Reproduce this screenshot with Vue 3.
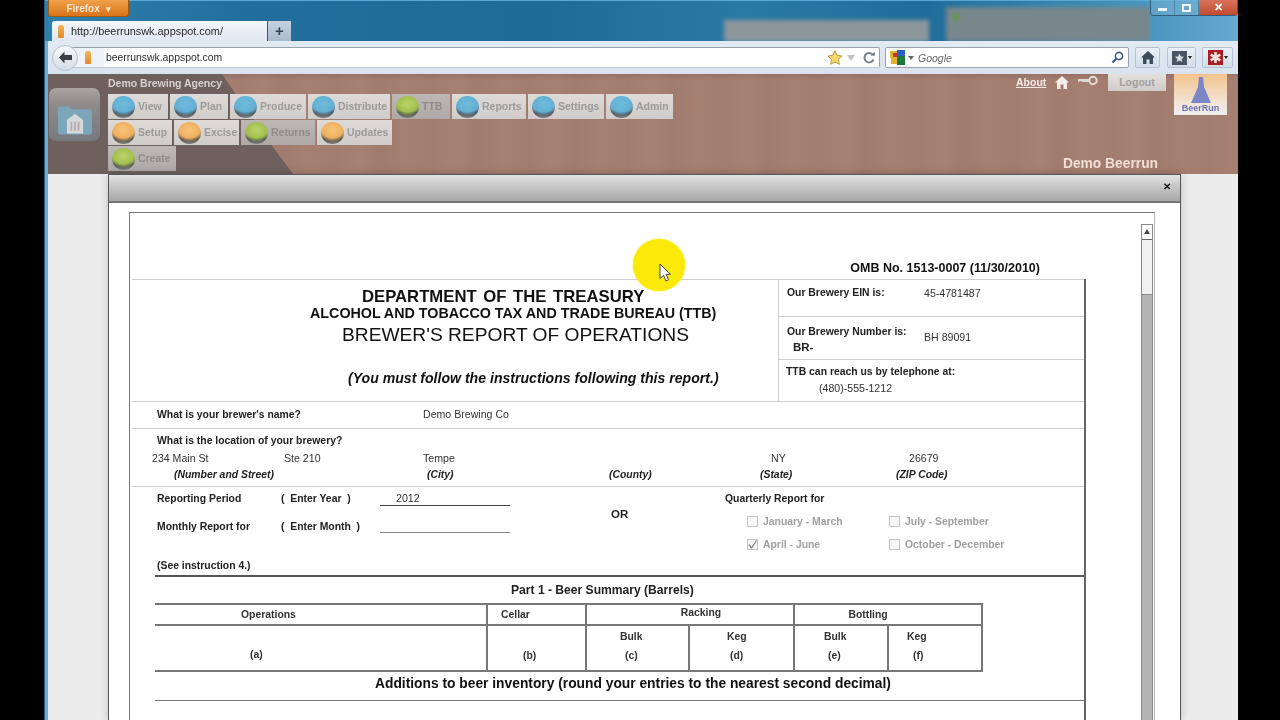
<template>
  <div class="screen">
    <div class="window">
      <div class="titlebar">
        <div class="blur-win win-a"></div>
        <div class="blur-win win-b"><span class="win-b-dot"></span></div>
        <button class="ff-btn">Firefox <span class="ff-caret">▾</span></button>
        <div class="win-controls">
          <span class="ctl"><i class="ctl-min"></i></span>
          <span class="ctl"><i class="ctl-max"></i></span>
          <span class="ctl ctl-close">✕</span>
        </div>
        <div class="tabs">
          <div class="tab"><span class="bottle"></span>http://beerrunswk.appspot.com/</div>
          <div class="tab-new">+</div>
        </div>
      </div>

      <div class="toolbar">
        <div class="back">
          <svg width="15" height="13" viewBox="0 0 15 13"><path d="M6.500 .5 1 6.500l5.500 6V9h7.500V4H6.500z" fill="#3c4147" /></svg>
        </div>
        <div class="urlbar">
          <span class="url-icon"><span class="bottle"></span></span>
          <span class="url-text">beerrunswk.appspot.com</span>
          <svg class="star" width="16" height="15" viewBox="0 0 16 15"><path d="M8 .8l2.200 4.500 4.900.7-3.600 3.400.9 4.900L8 12l-4.400 2.300.9-4.900L.9 6l4.900-.7z" fill="#f6d66c" stroke="#b08a2c" stroke-width=".8" /></svg>
          <span class="url-drop"></span>
          <svg width="14" height="14" viewBox="0 0 14 14"><path d="M11.500 8.500A4.700 4.700 0 1 1 10.600 3.500" fill="none" stroke="#7a8289" stroke-width="2" /><path d="M8.500 4.800h4.300V.6z" fill="#7a8289" /></svg>
        </div>
        <div class="search">
          <svg width="16" height="15" viewBox="0 0 16 15"><rect x="0" y="1" width="7" height="7" fill="#d9b53a" /><rect x="7" y="0" width="8" height="6" fill="#2a5fc4" /><rect x="7" y="6" width="8" height="9" fill="#1d7a3a" /><rect x="1" y="8" width="6" height="6" fill="#e2b030" /><rect x="3" y="3" width="4" height="4" fill="#c9352b" /></svg>
          <span class="search-drop"></span>
          <span class="search-text">Google</span>
          <svg class="lens" width="13" height="13" viewBox="0 0 13 13"><circle cx="8" cy="5" r="3.600" fill="none" stroke="#3f5f80" stroke-width="1.600" /><path d="M5.500 7.500 1.500 11.500" stroke="#3f5f80" stroke-width="2.400" /></svg>
        </div>
        <div class="tool-btn tb-home">
          <svg width="14" height="13" viewBox="0 0 14 13"><path d="M7 0 0 6.500h2V13h3.500V8.500h3V13H12V6.500h2z" fill="#3d4c5c" /></svg>
        </div>
        <div class="tool-btn tb-book">
          <svg width="15" height="14" viewBox="0 0 15 14"><rect width="15" height="14" fill="#4a5563" /><path d="M7.500 2.500l1.400 2.900 3.100.4-2.300 2.200.6 3.100-2.800-1.500-2.800 1.500.6-3.100L3 5.800l3.100-.4z" fill="#d6dde4" /></svg>
          <span class="mini-caret"></span>
        </div>
        <div class="tool-btn tb-lp">
          <svg width="15" height="15" viewBox="0 0 15 15"><rect width="15" height="15" fill="#a91f24" /><path d="M7.500 2v11M2.700 4.700l9.600 5.600M12.300 4.700l-9.600 5.600" stroke="#f4e4dc" stroke-width="2.600" /></svg>
          <span class="mini-caret"></span>
        </div>
      </div>

      <div class="page">
        <header class="site-head">
          <div class="dark-shape"></div>
          <div class="folder">
            <svg width="36" height="30" viewBox="0 0 40 32">
              <path d="M1 4q0-3 3-3h9l3 3h20q3 0 3 3v22q0 3-3 3H4q-3 0-3-3z" fill="#7da5ba" />
              <path d="M20 9 11 16v15h18V16z" fill="#d5d9da" />
              <path d="M15 18h2v10h-2zM19 18h2v10h-2zM23 18h2v10h-2z" fill="#b7a8ae" />
            </svg>
          </div>
          <div class="head-main">
            <div class="agency">Demo Brewing Agency</div>
            <nav class="menu">
              <div v-for="(row, i) in menuRows" :key="i" class="menu-row">
                <div v-for="item in row" :key="item.label" class="menu-btn" :class="{ active: item.color === 'green' }" :style="{ width: item.w + 'px' }">
                  <span class="orb" :class="item.color"></span>
                  <span>{{ item.label }}</span>
                </div>
              </div>
            </nav>
          </div>
          <div class="head-right">
            <div class="head-links">
              <span class="about">About</span>
              <svg class="home" width="14" height="13" viewBox="0 0 14 13"><path d="M7 0 0 6.500h2V13h3.500V8.500h3V13H12V6.500h2z" fill="#f2ebe6" /></svg>
              <svg class="key" width="20" height="11" viewBox="0 0 20 11"><circle cx="15" cy="5.500" r="3.700" fill="none" stroke="#e3ddd6" stroke-width="2" /><path d="M0 4h11v3H5L3 6 0 7z" fill="#d8dcd6" /></svg>
              <span class="logout">Logout</span>
              <div class="logo">
                <svg width="22" height="26" viewBox="0 0 22 26"><path d="M9 0h4l1 10 7 16H1l7-16z" fill="#7c86c6" /></svg>
                <span class="logo-text">BeerRun</span>
              </div>
            </div>
            <div class="user">Demo Beerrun</div>
          </div>
        </header>

        <main class="content">
          <section class="modal">
            <div class="modal-head"><span class="modal-x">✕</span></div>
            <div class="modal-body">
              <div class="frame">
                <form class="form">
                  <div class="omb">OMB No. 1513-0007 (11/30/2010)</div>

                  <div class="form-body">
                    <div class="row head-row">
                      <div class="titles">
                        <div class="t-dept">DEPARTMENT OF THE TREASURY</div>
                        <div class="t-ttb">ALCOHOL AND TOBACCO TAX AND TRADE BUREAU (TTB)</div>
                        <div class="t-report">BREWER'S REPORT OF OPERATIONS</div>
                        <div class="t-note">(You must follow the instructions following this report.)</div>
                      </div>
                      <div class="facts">
                        <div class="fact fact-ein"><b>Our Brewery EIN is:</b><span>45-4781487</span></div>
                        <div class="fact fact-num">
                          <div>
                            <b>Our Brewery Number is:</b>
                            <b class="br">BR-</b>
                          </div>
                          <span>BH 89091</span>
                        </div>
                        <div class="fact-tel"><b>TTB can reach us by telephone at:</b><span>(480)-555-1212</span></div>
                      </div>
                    </div>

                    <div class="row name-row"><b>What is your brewer's name?</b><span>Demo Brewing Co</span></div>

                    <div class="row loc-row">
                      <b class="loc-label">What is the location of your brewery?</b>
                      <div class="loc-values">
                        <span>234 Main St</span><span>Ste 210</span><span>Tempe</span><span>NY</span><span>26679</span>
                      </div>
                      <div class="loc-caps">
                        <i>(Number and Street)</i><i>(City)</i><i>(County)</i><i>(State)</i><i>(ZIP Code)</i>
                      </div>
                    </div>

                    <div class="row period">
                      <div class="p-left">
                        <div class="p-line">
                          <b>Reporting Period</b><b>(&nbsp; Enter Year &nbsp;)</b><span class="blank">2012</span>
                        </div>
                        <div class="p-line">
                          <b>Monthly Report for</b><b>(&nbsp; Enter Month &nbsp;)</b><span class="blank"></span>
                        </div>
                        <b class="p-see">(See instruction 4.)</b>
                      </div>
                      <b class="p-or">OR</b>
                      <div class="p-right">
                        <b class="q-title">Quarterly Report for</b>
                        <div class="q-grid">
                          <label v-for="q in quarters" :key="q.label" class="q-item">
                            <span class="q-box">
                              <svg v-if="q.checked" width="11" height="11" viewBox="0 0 11 11"><path d="M2 5.500 4.500 9 9.500 1.500" fill="none" stroke="#8a8a8a" stroke-width="1.300" /></svg>
                            </span>
                            {{ q.label }}
                          </label>
                        </div>
                      </div>
                    </div>

                    <div class="part-title">Part 1 - Beer Summary (Barrels)</div>

                    <div class="summary">
                      <div class="c c-ops">Operations</div>
                      <div class="c c-cellar">Cellar</div>
                      <div class="c c-rack">Racking</div>
                      <div class="c c-bott">Bottling</div>
                      <div class="c c-a">(a)</div>
                      <div class="c c-b">(b)</div>
                      <div class="c c-sub c-c"><span>Bulk</span><span>(c)</span></div>
                      <div class="c c-sub c-d"><span>Keg</span><span>(d)</span></div>
                      <div class="c c-sub c-e"><span>Bulk</span><span>(e)</span></div>
                      <div class="c c-sub c-f"><span>Keg</span><span>(f)</span></div>
                    </div>

                    <div class="additions">Additions to beer inventory (round your entries to the nearest second decimal)</div>
                  </div>
                </form>

                <div class="scrollbar">
                  <div class="sb-up"></div>
                  <div class="sb-thumb"></div>
                  <div class="sb-track"></div>
                </div>
              </div>
            </div>
            <div class="pointer">
              <svg width="12" height="19" viewBox="0 0 12 19"><path d="M1 1v14.500l3.500-3.200L7 18l2.600-1.200-2.500-5.500h4.400z" fill="#fff" stroke="#444" stroke-width="1" /></svg>
            </div>
          </section>
        </main>
      </div>
    </div>
  </div>
</template>

<script setup>
const menuRows = [
  [
    { label: 'View', color: 'blue', w: 60 },
    { label: 'Plan', color: 'blue', w: 58 },
    { label: 'Produce', color: 'blue', w: 76 },
    { label: 'Distribute', color: 'blue', w: 82 },
    { label: 'TTB', color: 'green', w: 58 },
    { label: 'Reports', color: 'blue', w: 74 },
    { label: 'Settings', color: 'blue', w: 76 },
    { label: 'Admin', color: 'blue', w: 67 },
  ],
  [
    { label: 'Setup', color: 'orange', w: 64 },
    { label: 'Excise', color: 'orange', w: 65 },
    { label: 'Returns', color: 'green', w: 74 },
    { label: 'Updates', color: 'orange', w: 75 },
  ],
  [{ label: 'Create', color: 'green', w: 68 }],
]

const quarters = [
  { label: 'January - March' },
  { label: 'July - September' },
  { label: 'April - June', checked: true },
  { label: 'October - December' },
]
</script>

<style>
html,
body {
  margin: 0;
  overflow: hidden;
  background: #000;
}
</style>

<style scoped>
* {
  box-sizing: border-box;
}

.screen {
  width: 1280px;
  height: 720px;
  padding: 0 42px 0 44px;
  background: #000;
  font-family: "Liberation Sans", Arial, sans-serif;
  overflow: hidden;
}

.window {
  height: 100%;
  display: flex;
  flex-direction: column;
  background: #6fabd0;
  border-left: 1px solid #2c5d7c;
}

/* title bar */
.titlebar {
  position: relative;
  height: 41px;
  flex: none;
  background: linear-gradient(90deg, #2f80ab 0, #226f9d 200px, #1f6b97 500px, #2a7aa6 700px, #1f6d9a 880px, #4b97c1 1110px, #67a9cf 1193px);
  border-top: 1px solid #57a8d6;
  filter: blur(0.5px);
}

.blur-win {
  position: absolute;
  background: #8f9a9f;
  filter: blur(2px);
}

.win-a {
  left: 679px;
  top: 19px;
  width: 205px;
  height: 22px;
  background: #8c979c;
}

.win-b {
  left: 901px;
  top: 6px;
  width: 204px;
  height: 35px;
  background: #78878c;
}

.win-b-dot {
  display: block;
  width: 6px;
  height: 6px;
  margin: 7px 0 0 7px;
  background: #5f9a3a;
}

.ff-btn {
  position: absolute;
  left: 3px;
  top: -1px;
  width: 81px;
  height: 17px;
  padding: 0;
  border: 1px solid #9c5a14;
  border-top: 0;
  border-radius: 0 0 3px 3px;
  background: linear-gradient(#f0a24a, #d9741a);
  color: #fbe7cf;
  font: bold 10px "Liberation Sans", sans-serif;
}

.ff-caret {
  font-size: 9px;
  margin-left: 3px;
}

.win-controls {
  position: absolute;
  right: 0;
  top: -1px;
  display: flex;
  height: 16px;
  border: 1px solid #2f5f7d;
  border-top: 0;
  border-radius: 0 0 4px 4px;
}

.ctl {
  width: 24px;
  display: flex;
  align-items: center;
  justify-content: center;
  background: rgba(255, 255, 255, 0.12);
  border-right: 1px solid #4d83a3;
  color: #fff;
}

.ctl-close {
  width: 38px;
  background: linear-gradient(#d9735c, #c04a30);
  border-right: 0;
  font-size: 11px;
  font-weight: bold;
}

.ctl-min {
  width: 9px;
  height: 3px;
  margin-top: 4px;
  background: #eef4f8;
}

.ctl-max {
  width: 9px;
  height: 8px;
  border: 2px solid #eef4f8;
}

.tabs {
  position: absolute;
  left: 7px;
  top: 20px;
  display: flex;
  align-items: flex-end;
}

.tab {
  width: 216px;
  height: 20px;
  display: flex;
  align-items: center;
  gap: 7px;
  padding-left: 6px;
  background: linear-gradient(#f4f7fb, #dfe7f1);
  border-right: 1px solid #47566a;
  border-radius: 3px 0 0 0;
  font-size: 10.900px;
  color: #26282b;
}

.tab-new {
  width: 23px;
  height: 20px;
  text-align: center;
  background: linear-gradient(#c5d3e0, #a9bacb);
  color: #33414f;
  font-size: 15px;
  font-weight: bold;
  line-height: 19px;
}

.bottle {
  display: block;
  width: 6px;
  height: 13px;
  flex: none;
  background: linear-gradient(#f0b55a, #e08a24);
  border-radius: 3px 3px 1px 1px;
}

/* toolbar */
.toolbar {
  height: 33px;
  flex: none;
  display: flex;
  align-items: center;
  margin-left: 3px;
  padding: 0 5px 0 2px;
  background: linear-gradient(#e2eaf3, #d9e3ee);
  filter: blur(0.4px);
}

.back {
  width: 26px;
  height: 26px;
  flex: none;
  display: flex;
  align-items: center;
  justify-content: center;
  margin-left: 2px;
  border-radius: 50%;
  border: 1px solid #b5c0cb;
  background: linear-gradient(#f6f8fb, #d5dde6);
  position: relative;
  z-index: 1;
}

.urlbar {
  width: 813px;
  height: 21px;
  margin-left: -9px;
  display: flex;
  align-items: center;
  padding-right: 3px;
  background: #fff;
  border: 1px solid #9aa3ac;
  border-bottom-color: #c0c8d0;
  border-radius: 2px;
}

.url-icon {
  width: 34px;
  height: 100%;
  padding: 3px 0 0 15px;
  flex: none;
  background: #eef3f8;
}

.url-text {
  flex: 1;
  padding-left: 2px;
  font-size: 10.400px;
  color: #2a2c2e;
}

.star {
  margin-right: 4px;
}

.url-drop {
  width: 0;
  height: 0;
  margin-right: 7px;
  border: 4px solid transparent;
  border-top: 6px solid #c0c4c8;
  border-bottom: 0;
}

.search {
  width: 244px;
  height: 21px;
  flex: none;
  margin-left: 5px;
  display: flex;
  align-items: center;
  padding: 0 4px;
  background: #fff;
  border: 1px solid #9aa3ac;
  border-radius: 2px;
}

.search-drop {
  width: 0;
  height: 0;
  margin-left: 2px;
  border: 3px solid transparent;
  border-top: 4px solid #666;
  border-bottom: 0;
}

.search-text {
  flex: 1;
  padding-left: 4px;
  font-size: 10.500px;
  font-style: italic;
  color: #666;
}

.tool-btn {
  height: 21px;
  flex: none;
  display: flex;
  align-items: center;
  justify-content: center;
  gap: 1px;
  border: 1px solid #b6c2ce;
  border-radius: 2px;
  background: linear-gradient(#e9eff6, #d3dde8);
}

.tb-home {
  width: 25px;
  margin-left: 6px;
}

.tb-book {
  width: 29px;
  margin-left: 7px;
}

.tb-lp {
  width: 31px;
  margin-left: 6px;
}

.mini-caret {
  width: 0;
  height: 0;
  border: 2px solid transparent;
  border-top: 3px solid #222;
  border-bottom: 0;
}

/* page */
.page {
  flex: 1;
  min-height: 0;
  margin-left: 3px;
  display: flex;
  flex-direction: column;
  background: #efefef;
}

.site-head {
  position: relative;
  height: 100px;
  flex: none;
  display: flex;
  overflow: hidden;
  background:
    linear-gradient(rgba(110, 60, 60, 0.2), rgba(0, 0, 0, 0) 6px),
    repeating-linear-gradient(90deg, #a37d70 0, #a68072 23px, #a17b6e 41px, #a57f71 67px, #a27c6f 97px);
}

.dark-shape {
  position: absolute;
  inset: 0;
  background: #6e605d;
  clip-path: polygon(0 0, 174px 0, 187px 19px, 225px 73px, 245px 100px, 0 100px);
}

.folder {
  position: relative;
  width: 51px;
  height: 53px;
  margin: 14px 0 0 1px;
  flex: none;
  display: flex;
  align-items: flex-end;
  justify-content: center;
  padding-bottom: 6px;
  border-radius: 7px;
  background: linear-gradient(#a8a4a3, #8f8b8a 30%, #75797d);
  filter: blur(0.7px);
}

.head-main {
  position: relative;
  margin-left: 8px;
  filter: blur(0.6px);
}

.agency {
  height: 20px;
  padding-top: 3px;
  font-size: 10.500px;
  font-weight: bold;
  color: #d8d2cf;
}

.menu {
  display: flex;
  flex-direction: column;
  gap: 1px;
}

.menu-row {
  display: flex;
  gap: 2px;
}

.menu-btn {
  height: 25px;
  display: flex;
  align-items: center;
  gap: 3px;
  padding: 0 0 1px 4px;
  background: linear-gradient(#dedad8, #d0ccca);
  font-size: 10.500px;
  font-weight: bold;
  color: #9b9b9b;
  white-space: nowrap;
}

.menu-btn.active {
  background: linear-gradient(#bdb7b5, #aea9a7);
  color: #8f8b89;
}

.orb {
  width: 23px;
  height: 22px;
  flex: none;
  margin-top: 1px;
  border-radius: 50%;
  background-repeat: no-repeat;
}

.orb.blue {
  background-image: radial-gradient(ellipse 62% 52% at 50% 36%, #6fbcdc 0, #62b0d4 70%, rgba(98, 176, 212, 0) 100%), linear-gradient(#e6e9ea 0, #c3cbd0 26%, #46535e 74%, #7f7f7f 100%);
}

.orb.orange {
  background-image: radial-gradient(ellipse 62% 52% at 50% 36%, #f6c47a 0, #efb060 70%, rgba(239, 176, 96, 0) 100%), linear-gradient(#ece8e0 0, #d2c8b8 26%, #56503f 74%, #7f7f7f 100%);
}

.orb.green {
  background-image: radial-gradient(ellipse 62% 52% at 50% 36%, #bcd46c 0, #a2c04e 70%, rgba(162, 192, 78, 0) 100%), linear-gradient(#e6e8da 0, #c6ccb4 26%, #4f5844 74%, #7f7f7f 100%);
}

.head-right {
  position: absolute;
  right: 0;
  top: 0;
  width: 230px;
  height: 100%;
  filter: blur(0.5px);
}

.head-links {
  display: flex;
  align-items: flex-start;
  padding-left: 8px;
  color: #f2ebe6;
}

.about {
  width: 30px;
  margin: 2px 9px 0 0;
  font-size: 10.500px;
  font-weight: bold;
  text-decoration: underline;
}

.home {
  margin-top: 2px;
}

.key {
  margin: 1px 0 0 9px;
}

.logout {
  width: 58px;
  height: 17px;
  margin-left: 10px;
  text-align: center;
  background: linear-gradient(#e4e0de, #cfcbc9);
  font-size: 10.500px;
  font-weight: bold;
  line-height: 16px;
  color: #a0a0a0;
}

.logo {
  width: 53px;
  height: 41px;
  margin-left: 8px;
  display: flex;
  flex-direction: column;
  align-items: center;
  padding-top: 3px;
  background: linear-gradient(#f2c38c, #f2e4d6 70%, #eee);
}

.logo-text {
  font-size: 9px;
  line-height: 10px;
  font-weight: bold;
  color: #6a72b4;
}

.user {
  position: absolute;
  right: 80px;
  bottom: 3px;
  font-size: 13.800px;
  font-weight: bold;
  color: #f0dfd6;
}

/* modal */
.content {
  flex: 1;
  min-height: 0;
  padding-left: 60px;
  background: #ececec;
}

.modal {
  position: relative;
  width: 1073px;
  height: 100%;
  border: 1px solid #555;
  border-bottom: 0;
  background: #fff;
  box-shadow: 0 0 8px rgba(0, 0, 0, 0.2);
}

.modal-head {
  height: 28px;
  display: flex;
  align-items: center;
  justify-content: flex-end;
  padding: 0 9px 3px 0;
  background: linear-gradient(#e4e4e4, #c8c8c8 40%, #a9a9a9);
  border-bottom: 2px solid #777;
}

.modal-x {
  font-size: 10px;
  font-weight: bold;
  color: #111;
}

.modal-body {
  padding: 9px 0 0 20px;
}

.frame {
  width: 1026px;
  height: 509px;
  display: flex;
  padding-left: 2px;
  border: 1px solid #777;
  border-right-color: #b5b5b5;
  border-bottom: 0;
}

.scrollbar {
  width: 12px;
  margin: 11px 0 0 55px;
  display: flex;
  flex-direction: column;
  flex: none;
  border: 1px solid #8a8a8a;
  border-bottom: 0;
}

.sb-up {
  height: 15px;
  border-bottom: 1px solid #666;
  position: relative;
}

.sb-up::after {
  content: "";
  position: absolute;
  left: 2px;
  top: 4px;
  border: 3px solid transparent;
  border-top: 0;
  border-bottom: 5px solid #444;
}

.sb-thumb {
  height: 55px;
  background: #f0f0f0;
  border-bottom: 1px solid #888;
}

.sb-track {
  flex: 1;
  background: #b4b4b4;
}

.pointer {
  position: absolute;
  left: 524px;
  top: 64px;
  width: 52px;
  height: 52px;
  display: flex;
  justify-content: center;
  padding-top: 24px;
  border-radius: 50%;
  background: #fbe90a;
  box-shadow: 0 0 2px #fbe90a;
}

.pointer svg {
  margin-left: 12px;
}

/* form */
.form {
  width: 954px;
  flex: none;
  display: flex;
  flex-direction: column;
  font-size: 10.600px;
  color: #333;
}

.form b,
.form i {
  font-size: 10.400px;
  color: #222;
}

.omb {
  height: 66px;
  flex: none;
  padding: 48px 46px 0 0;
  text-align: right;
  font-size: 12.500px;
  font-weight: bold;
  color: #111;
}

.form-body {
  flex: 1;
  border-right: 2px solid #666;
}

.row {
  border-top: 1px solid #cfcfcf;
}

.head-row {
  height: 122px;
  display: flex;
}

.titles {
  width: 647px;
  border-right: 1px solid #cfcfcf;
  color: #111;
  white-space: nowrap;
}

.t-dept {
  padding: 8px 0 0 230px;
  font-size: 16.700px;
  line-height: 18px;
  font-weight: bold;
  word-spacing: 2px;
}

.t-ttb {
  margin-top: -1px;
  padding-left: 178px;
  font-size: 14.300px;
  line-height: 16px;
  font-weight: bold;
}

.t-report {
  padding: 3px 0 0 210px;
  font-size: 19.200px;
  line-height: 22px;
}

.t-note {
  padding: 24px 0 0 216px;
  font-size: 14.100px;
  line-height: 16px;
  font-weight: bold;
  font-style: italic;
}

.facts {
  flex: 1;
  display: flex;
  flex-direction: column;
}

.fact {
  display: flex;
  border-bottom: 1px solid #cfcfcf;
  padding-left: 8px;
}

.fact-ein {
  height: 37px;
  padding-top: 7px;
}

.fact-num {
  height: 43px;
  padding-top: 8px;
}

.fact-ein b {
  width: 137px;
}

.fact-num > div {
  width: 137px;
}

.fact-num > span {
  padding-top: 6px;
}

.form .br {
  display: block;
  margin: 4px 0 0 6px;
  font-size: 11.500px;
}

.fact-tel {
  padding: 6px 0 0 7px;
}

.fact-tel b,
.fact-tel span {
  display: block;
}

.fact-tel span {
  margin: 5px 0 0 33px;
}

.name-row {
  height: 27px;
  display: grid;
  grid-template-columns: 266px 1fr;
  align-items: center;
  padding: 0 0 2px 25px;
}

.loc-row {
  height: 58px;
  padding-top: 6px;
}

.loc-label {
  display: block;
  padding-left: 25px;
}

.loc-values,
.loc-caps {
  display: grid;
}

.loc-values {
  margin-top: 6px;
  grid-template-columns: 132px 139px 348px 138px 1fr;
  padding-left: 20px;
}

.loc-caps {
  margin-top: 5px;
  grid-template-columns: 253px 182px 151px 136px 1fr;
  padding-left: 42px;
  font-weight: bold;
}

.period {
  position: relative;
  height: 90px;
  display: flex;
}

.period::after {
  content: "";
  position: absolute;
  left: 23px;
  right: 0;
  bottom: -1px;
  height: 2px;
  background: #555;
}

.p-left {
  width: 479px;
  padding: 5px 0 0 25px;
}

.p-line {
  height: 28px;
  display: grid;
  grid-template-columns: 124px 99px 130px;
  align-items: start;
  padding-top: 1px;
}

.blank {
  height: 13px;
  padding-left: 16px;
  line-height: 11px;
  border-bottom: 1px solid #444;
}

.p-line + .p-line .blank {
  height: 12px;
  border-bottom-color: #888;
}

.p-see {
  display: block;
  margin-top: 12px;
}

.form .p-or {
  width: 114px;
  padding-top: 21px;
  font-size: 11.500px;
}

.p-right {
  flex: 1;
  padding-top: 6px;
}

.q-title {
  display: block;
}

.q-grid {
  display: grid;
  grid-template-columns: 142px 1fr;
  grid-auto-rows: 23px;
  margin: 10px 0 0 22px;
}

.q-item {
  display: flex;
  align-items: center;
  gap: 5px;
  height: 15px;
  font-size: 10.400px;
  font-weight: bold;
  color: #a0a0a0;
}

.q-box {
  width: 11px;
  height: 11px;
  border: 1px solid #c4c4c4;
  background: #f6f6f6;
  display: flex;
}

.q-box svg {
  flex: none;
  margin: -1px;
}

.part-title {
  height: 27px;
  padding: 7px 0 0 379px;
  font-size: 12.100px;
  font-weight: bold;
  color: #222;
}

.summary {
  width: 828px;
  margin-left: 23px;
  display: grid;
  grid-template-columns: 331px 99px 103px 105px 94px 96px;
  grid-template-rows: 21px 44px;
  border-top: 2px solid #777;
  border-bottom: 2px solid #777;
  font-size: 10.400px;
  font-weight: bold;
  color: #333;
}

.c {
  border-left: 2px solid #777;
}

.c-ops {
  border-left: 0;
  padding: 4px 0 0 86px;
  border-bottom: 2px solid #777;
}

.c-cellar {
  padding: 4px 0 0 13px;
  border-bottom: 2px solid #777;
}

.c-rack {
  grid-column: span 2;
  text-align: center;
  padding: 2px 0 0 22px;
  border-bottom: 2px solid #777;
}

.c-bott {
  grid-column: span 2;
  text-align: center;
  padding: 4px 40px 0 0;
  border-right: 2px solid #777;
  border-bottom: 2px solid #777;
}

.c-a {
  border-left: 0;
  padding: 23px 0 0 95px;
}

.c-b {
  padding: 24px 0 0 35px;
}

.c-sub {
  display: flex;
  flex-direction: column;
  gap: 8px;
  padding-top: 5px;
}

.c-c {
  padding-left: 33px;
}

.c-c span + span {
  padding-left: 5px;
}

.c-d {
  padding-left: 37px;
}

.c-d span + span {
  padding-left: 3px;
}

.c-e {
  padding: 5px 0 0 29px;
}

.c-e span + span {
  padding-left: 4px;
}

.c-f {
  padding: 5px 0 0 18px;
  border-right: 2px solid #777;
}

.c-f span + span {
  padding-left: 6px;
}

.additions {
  width: 929px;
  height: 29px;
  margin-left: 23px;
  padding: 4px 0 0 220px;
  border-bottom: 1px solid #777;
  font-size: 13.800px;
  font-weight: bold;
  color: #111;
  white-space: nowrap;
}
</style>
